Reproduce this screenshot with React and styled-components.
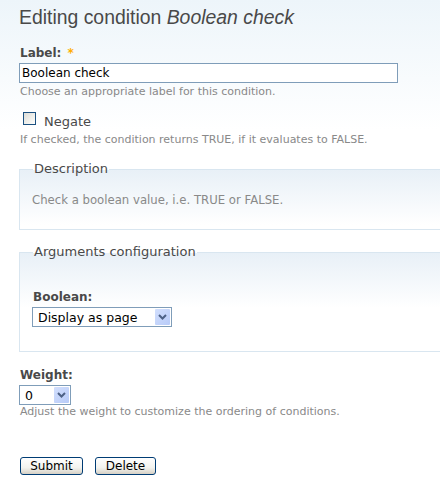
import React from 'react';
import styled, { createGlobalStyle } from 'styled-components';

const GlobalStyle = createGlobalStyle`
    html, body {
        margin: 0;
        padding: 0;
    }

    body {
        width: 440px;
        height: 498px;
        overflow: hidden;
        background: linear-gradient(to bottom, #edf5fa 0, #ffffff 130px);
        color: #494949;
        font-family: 'DejaVu Sans', Verdana, sans-serif;
        font-size: 12px;
    }
`;

function Chevron() {
    return (
        <svg width="9" height="6" viewBox="0 0 9 6">
            <path d="M1 1 L4.5 4.5 L8 1" fill="none" stroke="#4d6185" strokeWidth="2" />
        </svg>
    );
}

function Select({ value, width }) {
    return (
        <SelectBox $width={width}>
            <SelectValue>{value}</SelectValue>
            <ArrowButton>
                <Chevron />
            </ArrowButton>
        </SelectBox>
    );
}

export default function App() {
    return (
        <Page>
            <GlobalStyle />
            <Title>
                Editing condition <em>Boolean check</em>
            </Title>

            <FormItem $top={17}>
                <Label>
                    Label: <Required>*</Required>
                </Label>
                <TextInput type="text" defaultValue="Boolean check" />
                <Description $top={2}>Choose an appropriate label for this condition.</Description>
            </FormItem>

            <FormItem $top={11}>
                <CheckRow>
                    <Checkbox type="checkbox" />
                    <span>Negate</span>
                </CheckRow>
                <Description $top={3}>If checked, the condition returns TRUE, if it evaluates to FALSE.</Description>
            </FormItem>

            <Fieldset $top={14} $height={69}>
                <Legend>Description</Legend>
                <FieldText>Check a boolean value, i.e. TRUE or FALSE.</FieldText>
            </Fieldset>

            <Fieldset $top={14} $height={108}>
                <Legend>Arguments configuration</Legend>
                <FormItem $top={30}>
                    <Label>Boolean:</Label>
                    <Select value="Display as page" width={140} />
                </FormItem>
            </Fieldset>

            <FormItem $top={16}>
                <Label>Weight:</Label>
                <Select value="0" width={52} />
                <Description $top={0}>Adjust the weight to customize the ordering of conditions.</Description>
            </FormItem>

            <Actions>
                <Button $width={63}>Submit</Button>
                <Button $width={61}>Delete</Button>
            </Actions>
        </Page>
    );
}

const Page = styled.div`
    padding: 0 0 0 19px;
`;

const Title = styled.h2`
    margin: 5px 0 0;
    font-family: 'Liberation Sans', Arial, sans-serif;
    font-size: 19.4px;
    line-height: 24px;
    font-weight: normal;
    color: #494949;

    em {
        font-style: italic;
    }
`;

const FormItem = styled.div`
    margin-top: ${(p) => p.$top}px;
`;

const Label = styled.label`
    display: block;
    font-weight: bold;
    font-size: 12px;
    line-height: 14px;
    margin: 0 0 3px 1px;
    color: #494949;
`;

const Required = styled.span`
    color: #ffae00;
    margin-left: 2px;
`;

const TextInput = styled.input`
    box-sizing: border-box;
    display: block;
    width: 379px;
    height: 20px;
    margin: 0;
    padding: 0 2px;
    border: 1px solid #7f9db9;
    background: #fff;
    font-family: 'DejaVu Sans', Verdana, sans-serif;
    font-size: 12px;
    color: #000;
    outline: none;
`;

const Description = styled.div`
    margin: ${(p) => p.$top}px 0 0 1px;
    font-size: 11px;
    line-height: 14px;
    color: #898989;
`;

const CheckRow = styled.label`
    display: flex;
    align-items: flex-start;
    gap: 8px;
    height: 20px;
    margin-left: 4px;
    font-size: 13px;
    line-height: 17px;
    color: #494949;

    span {
        padding-top: 3px;
    }
`;

const Checkbox = styled.input`
    appearance: none;
    box-sizing: border-box;
    width: 13px;
    height: 13px;
    margin: 2px 0 0;
    border: 1px solid #1c5180;
    background: linear-gradient(135deg, #dcdcd7 0%, #f4f4f0 70%, #ffffff 100%);
`;

const Fieldset = styled.fieldset`
    box-sizing: border-box;
    width: 440px;
    height: ${(p) => p.$height}px;
    margin: ${(p) => p.$top}px 0 0;
    padding: 0 12px;
    border: 1px solid #d9e6f0;
    background: linear-gradient(to bottom, #e8f0f7 0, #ffffff 55px);
    min-width: 0;
`;

const Legend = styled.legend`
    padding: 0 1px;
    margin-left: 1px;
    font-size: 13px;
    line-height: 16px;
    color: #494949;
`;

const FieldText = styled.p`
    margin: 16px 0 0;
    font-size: 11.7px;
    line-height: 14px;
    color: #898989;
`;

const SelectBox = styled.div`
    box-sizing: border-box;
    display: flex;
    align-items: center;
    width: ${(p) => p.$width}px;
    height: 20px;
    border: 1px solid #7f9db9;
    background: #fff;
`;

const SelectValue = styled.span`
    flex: 1;
    padding-left: 5px;
    font-size: 12.5px;
    color: #000;
    white-space: nowrap;
`;

const ArrowButton = styled.span`
    display: flex;
    align-items: center;
    justify-content: center;
    width: 15px;
    height: 16px;
    margin-right: 1px;
    border-radius: 1px;
    background: linear-gradient(135deg, #d2dffd 0%, #b8cbf8 100%);
`;

const Actions = styled.div`
    display: flex;
    gap: 12px;
    margin-top: 38px;
    margin-left: 1px;
`;

const Button = styled.button`
    box-sizing: border-box;
    width: ${(p) => p.$width}px;
    height: 18px;
    padding: 0;
    border: 1px solid #003c74;
    border-radius: 3px;
    background: linear-gradient(to bottom, #ffffff 0%, #f3f3ef 60%, #d6d0c5 100%);
    font-family: 'DejaVu Sans', Verdana, sans-serif;
    font-size: 12px;
    line-height: 16px;
    color: #000;
`;
